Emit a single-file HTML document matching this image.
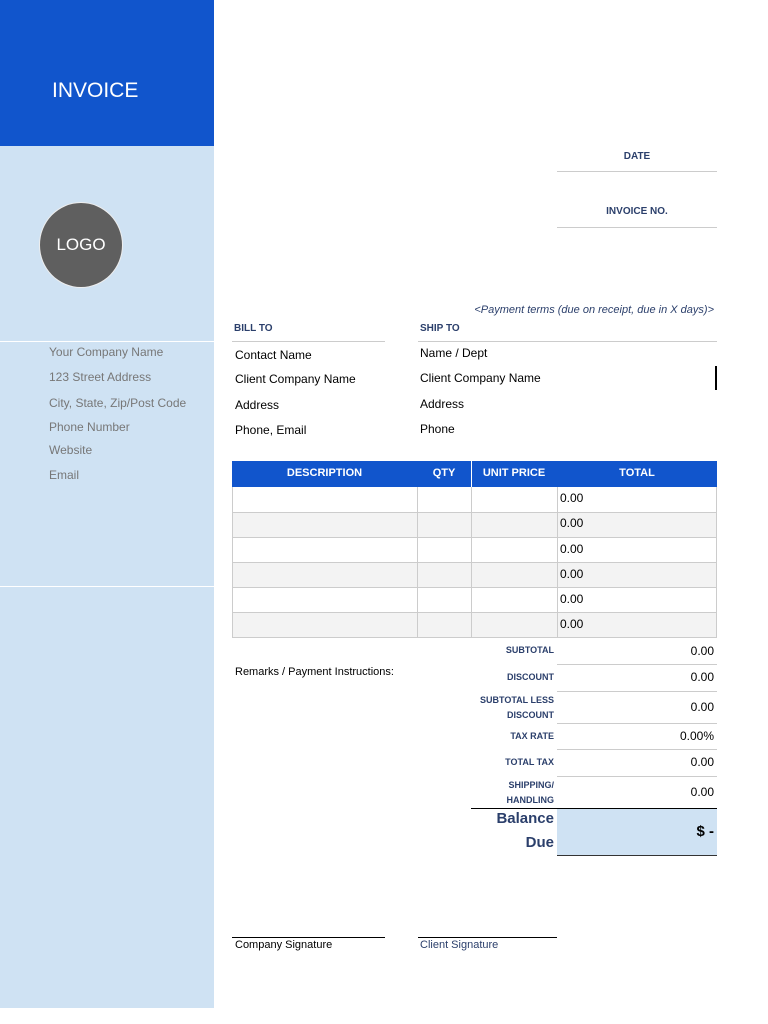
<!DOCTYPE html>
<html><head><meta charset="utf-8"><style>
*{margin:0;padding:0;box-sizing:border-box}
body{width:768px;height:1024px;position:relative;background:#fff;font-family:"Liberation Sans",sans-serif;overflow:hidden}
.a{position:absolute;white-space:nowrap}
.t{font-size:12px;color:#000;line-height:14px}
.g{font-size:12px;color:#777;line-height:14px}
.l{font-size:10px;font-weight:bold;color:#2b3f6b;line-height:12px}
.r{text-align:right}
.h{position:absolute;height:1px}
.v{position:absolute;width:1px;background:#ccc}
</style></head><body>
<div class="a" style="left:0;top:0;width:214px;height:146px;background:#1155cc"></div>
<div class="a" style="left:0;top:146px;width:214px;height:862px;background:#cfe2f3"></div>
<div class="h" style="left:0;top:341px;width:214px;background:#fff"></div>
<div class="h" style="left:0;top:586px;width:214px;background:#fff"></div>
<div class="a" style="left:52px;top:79px;font-size:21px;color:#fff;line-height:24px">INVOICE</div>
<div class="a" style="left:39px;top:202px;width:84px;height:86px;border-radius:50%;background:#5f5f5f;border:1px solid #eee"></div>
<div class="a" style="left:39px;top:235px;width:84px;text-align:center;font-size:17px;color:#fff;line-height:20px">LOGO</div>
<div class="a g" style="left:49px;top:345px">Your Company Name</div>
<div class="a g" style="left:49px;top:370px">123 Street Address</div>
<div class="a g" style="left:49px;top:396px">City, State, Zip/Post Code</div>
<div class="a g" style="left:49px;top:420px">Phone Number</div>
<div class="a g" style="left:49px;top:443px">Website</div>
<div class="a g" style="left:49px;top:468px">Email</div>

<div class="a l" style="left:557px;top:151px;width:160px;text-align:center">DATE</div>
<div class="h" style="left:557px;top:171px;width:160px;background:#ccc"></div>
<div class="a l" style="left:557px;top:206px;width:160px;text-align:center">INVOICE NO.</div>
<div class="h" style="left:557px;top:227px;width:160px;background:#ccc"></div>

<div class="a" style="left:420px;top:304px;width:294px;text-align:right;font-size:11px;font-style:italic;color:#2b3f6b">&lt;Payment terms (due on receipt, due in X days)&gt;</div>
<div class="a l" style="left:234px;top:323px">BILL TO</div>
<div class="a l" style="left:420px;top:323px">SHIP TO</div>
<div class="h" style="left:232px;top:341px;width:153px;background:#ccc"></div>
<div class="h" style="left:418px;top:341px;width:299px;background:#ccc"></div>
<div class="a t" style="left:235px;top:348px">Contact Name</div>
<div class="a t" style="left:235px;top:372px">Client Company Name</div>
<div class="a t" style="left:235px;top:398px">Address</div>
<div class="a t" style="left:235px;top:423px">Phone, Email</div>
<div class="a t" style="left:420px;top:346px">Name / Dept</div>
<div class="a t" style="left:420px;top:371px">Client Company Name</div>
<div class="a t" style="left:420px;top:397px">Address</div>
<div class="a t" style="left:420px;top:422px">Phone</div>
<div class="a" style="left:715px;top:366px;width:2px;height:24px;background:#000"></div>

<div class="a" style="left:232px;top:461px;width:485px;height:26px;background:#1155cc"></div>
<div class="a" style="left:232px;top:467px;width:185px;text-align:center;font-size:11px;font-weight:bold;color:#fff">DESCRIPTION</div>
<div class="a" style="left:417px;top:467px;width:54px;text-align:center;font-size:11px;font-weight:bold;color:#fff">QTY</div>
<div class="a" style="left:471px;top:467px;width:86px;text-align:center;font-size:11px;font-weight:bold;color:#fff">UNIT PRICE</div>
<div class="a" style="left:557px;top:467px;width:160px;text-align:center;font-size:11px;font-weight:bold;color:#fff">TOTAL</div>
<div class="a" style="left:471px;top:461px;width:1px;height:26px;background:#fff"></div>

<div class="a" style="left:232px;top:512px;width:485px;height:25px;background:#f3f3f3"></div>
<div class="a" style="left:232px;top:562px;width:485px;height:25px;background:#f3f3f3"></div>
<div class="a" style="left:232px;top:612px;width:485px;height:25px;background:#f3f3f3"></div>
<div class="h" style="left:232px;top:512px;width:485px;background:#ccc"></div>
<div class="h" style="left:232px;top:537px;width:485px;background:#ccc"></div>
<div class="h" style="left:232px;top:562px;width:485px;background:#ccc"></div>
<div class="h" style="left:232px;top:587px;width:485px;background:#ccc"></div>
<div class="h" style="left:232px;top:612px;width:485px;background:#ccc"></div>
<div class="h" style="left:232px;top:637px;width:485px;background:#ccc"></div>
<div class="v" style="left:232px;top:487px;height:150px"></div>
<div class="v" style="left:417px;top:487px;height:150px"></div>
<div class="v" style="left:471px;top:487px;height:150px"></div>
<div class="v" style="left:557px;top:487px;height:150px"></div>
<div class="v" style="left:716px;top:487px;height:150px"></div>
<div class="a t" style="left:560px;top:491px">0.00</div>
<div class="a t" style="left:560px;top:516px">0.00</div>
<div class="a t" style="left:560px;top:542px">0.00</div>
<div class="a t" style="left:560px;top:567px">0.00</div>
<div class="a t" style="left:560px;top:592px">0.00</div>
<div class="a t" style="left:560px;top:617px">0.00</div>

<div class="a" style="left:235px;top:666px;font-size:11px;color:#000">Remarks / Payment Instructions:</div>
<div class="a l r" style="left:440px;top:644px;width:114px;font-size:9px">SUBTOTAL</div>
<div class="a t r" style="left:560px;top:644px;width:154px">0.00</div>
<div class="h" style="left:557px;top:664px;width:160px;background:#ccc"></div>
<div class="a l r" style="left:440px;top:671px;width:114px;font-size:9px">DISCOUNT</div>
<div class="a t r" style="left:560px;top:670px;width:154px">0.00</div>
<div class="h" style="left:557px;top:691px;width:160px;background:#ccc"></div>
<div class="a l r" style="left:440px;top:693px;width:114px;font-size:9px;line-height:15px">SUBTOTAL LESS<br>DISCOUNT</div>
<div class="a t r" style="left:560px;top:700px;width:154px">0.00</div>
<div class="h" style="left:557px;top:723px;width:160px;background:#ccc"></div>
<div class="a l r" style="left:440px;top:730px;width:114px;font-size:9px">TAX RATE</div>
<div class="a t r" style="left:560px;top:729px;width:154px">0.00%</div>
<div class="h" style="left:557px;top:749px;width:160px;background:#ccc"></div>
<div class="a l r" style="left:440px;top:756px;width:114px;font-size:9px">TOTAL TAX</div>
<div class="a t r" style="left:560px;top:755px;width:154px">0.00</div>
<div class="h" style="left:557px;top:776px;width:160px;background:#ccc"></div>
<div class="a l r" style="left:440px;top:778px;width:114px;font-size:9px;line-height:15px">SHIPPING/<br>HANDLING</div>
<div class="a t r" style="left:560px;top:785px;width:154px">0.00</div>
<div class="h" style="left:471px;top:808px;width:246px;background:#000"></div>
<div class="a" style="left:557px;top:809px;width:160px;height:46px;background:#cfe2f3"></div>
<div class="h" style="left:557px;top:855px;width:160px;background:#333"></div>
<div class="a r" style="left:440px;top:807px;width:114px;font-size:15px;font-weight:bold;color:#2b3f6b;line-height:24px">Balance<br>Due</div>
<div class="a r" style="left:560px;top:823px;width:154px;font-size:15px;font-weight:bold;color:#000">$ -</div>

<div class="h" style="left:232px;top:937px;width:153px;background:#000"></div>
<div class="h" style="left:418px;top:937px;width:139px;background:#000"></div>
<div class="a" style="left:235px;top:939px;font-size:11px;color:#000">Company Signature</div>
<div class="a" style="left:420px;top:939px;font-size:11px;color:#2b3f6b">Client Signature</div>
</body></html>
